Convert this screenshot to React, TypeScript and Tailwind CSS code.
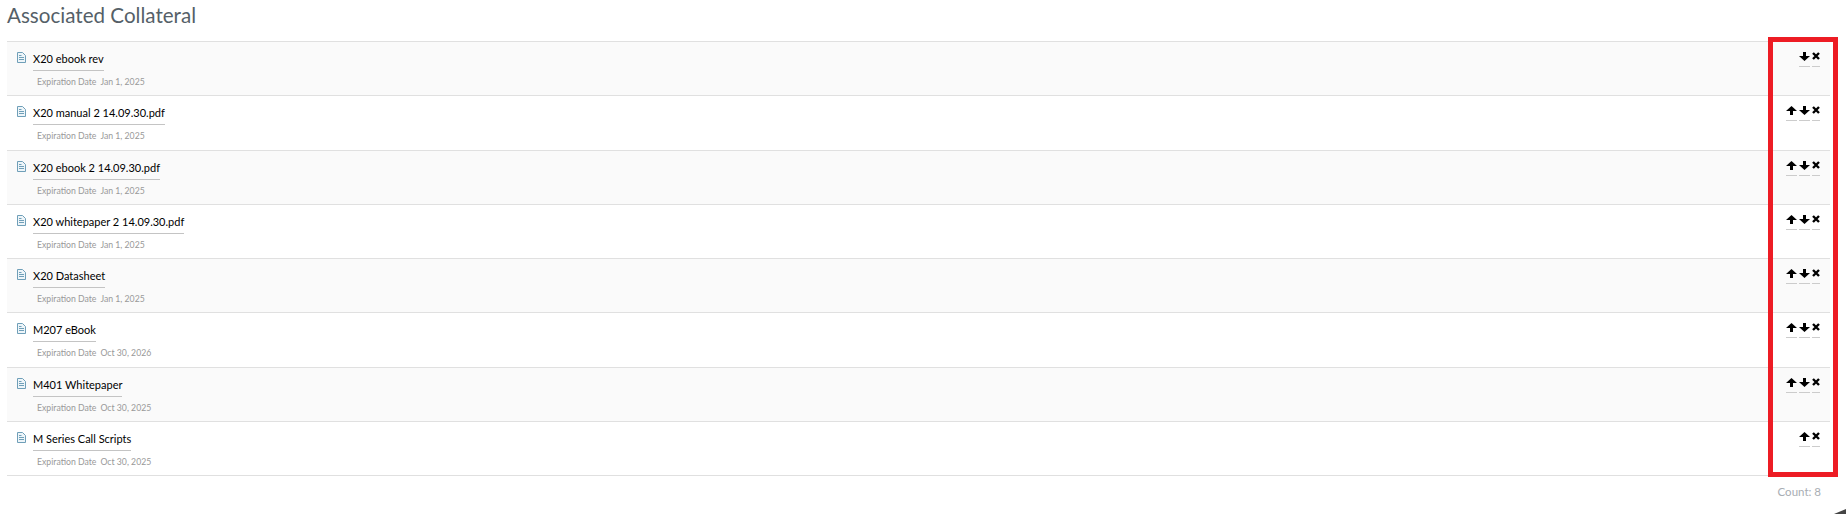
import React from 'react'

interface Item {
  name: string
  expires: string
}

const items: Item[] = [
  { name: 'X20 ebook rev', expires: 'Jan 1, 2025' },
  { name: 'X20 manual 2 14.09.30.pdf', expires: 'Jan 1, 2025' },
  { name: 'X20 ebook 2 14.09.30.pdf', expires: 'Jan 1, 2025' },
  { name: 'X20 whitepaper 2 14.09.30.pdf', expires: 'Jan 1, 2025' },
  { name: 'X20 Datasheet', expires: 'Jan 1, 2025' },
  { name: 'M207 eBook', expires: 'Oct 30, 2026' },
  { name: 'M401 Whitepaper', expires: 'Oct 30, 2025' },
  { name: 'M Series Call Scripts', expires: 'Oct 30, 2025' },
]

const FileIcon = () => (
  <svg width="9" height="11" viewBox="0 0 9 11" className="mt-[1px] shrink-0" fill="none">
    <path d="M0.5 0.5H5.5L8.5 3.5V10.5H0.5Z" fill="#eef5f9" stroke="#6f9fb8" />
    <path d="M2 3.5H4.5M2 5.5H7M2 7.5H7" stroke="#6f9fb8" />
  </svg>
)

const ArrowUp = () => (
  <svg width="11" height="9" viewBox="0 0 11 9">
    <path d="M5.5 0L11 5H7V9H4V5H0Z" fill="#000000" />
  </svg>
)

const ArrowDown = () => (
  <svg width="11" height="9" viewBox="0 0 11 9">
    <path d="M5.5 9L11 4H7V0H4V4H0Z" fill="#000000" />
  </svg>
)

const Cross = () => (
  <svg width="8" height="8" viewBox="0 0 8 8">
    <path d="M1 1L7 7M7 1L1 7" stroke="#000000" strokeWidth="2.4" />
  </svg>
)

const Action = ({ wide, children }: { wide?: boolean; children: React.ReactNode }) => (
  <span className={`flex h-[16px] items-start justify-center border-b border-[#cccccc] pt-[1px] ${wide ? 'w-[11px]' : 'w-[8px]'}`}>
    {children}
  </span>
)

const Row = ({ item, index, total }: { item: Item; index: number; total: number }) => (
  <div
    className={`flex h-[54.25px] justify-between border-b border-[#e0e0e0] pl-[10px] pr-[10px] pt-[9px] ${
      index % 2 === 0 ? 'bg-[#fafafa]' : 'bg-white'
    }`}
  >
    <div className="flex gap-[7px]">
      <FileIcon />
      <div className="pt-[1px]">
        <div className="w-fit border-b border-[#c4c4c4] pb-[4px] text-[11px] leading-[14px] text-black">
          {item.name}
        </div>
        <div className="mt-[5px] pl-[4px] text-[8.7px] leading-[12px] text-[#999999]">
          Expiration Date<span className="ml-[4px]">{item.expires}</span>
        </div>
      </div>
    </div>
    <div className="flex gap-[2px] self-start">
      {index > 0 && <Action wide><ArrowUp /></Action>}
      {index < total - 1 && <Action wide><ArrowDown /></Action>}
      <Action><Cross /></Action>
    </div>
  </div>
)

export default function App() {
  return (
    <div className="relative h-[514px] w-[1846px] overflow-hidden bg-white font-['Lato',sans-serif]">
      <div className="pl-[7px] pr-[16px]">
        <h2 className="h-[41px] pt-[1px] text-[20.6px] leading-[28px] text-[#555f68]">Associated Collateral</h2>
        <div className="border-t border-[#e0e0e0]">
          {items.map((item, i) => (
            <Row key={item.name} item={item} index={i} total={items.length} />
          ))}
        </div>
        <div className="pr-[9px] pt-[9px] text-right text-[11.5px] leading-[14px] text-[#a8adb3]">Count: 8</div>
      </div>
      <div className="absolute left-[1768px] top-[37px] h-[440px] w-[70px] border-[5px] border-[#ed1c24]" />
      <svg className="absolute bottom-0 right-0" width="12" height="5" viewBox="0 0 12 5">
        <path d="M0 5L12 0V5Z" fill="#444444" />
      </svg>
    </div>
  )
}
